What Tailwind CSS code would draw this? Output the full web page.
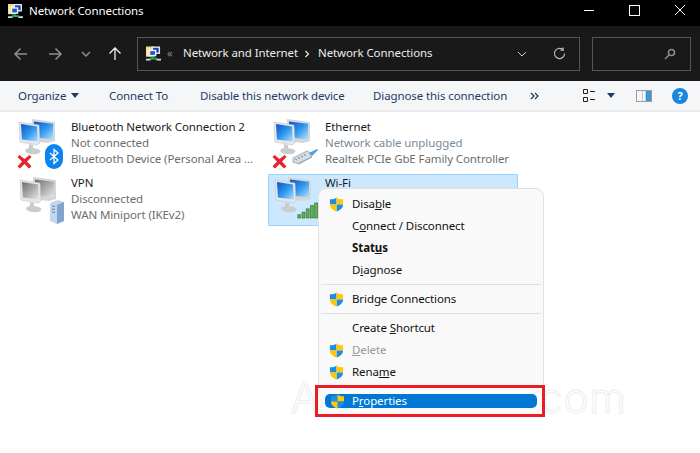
<!DOCTYPE html>
<html lang="en">
<head>
<meta charset="UTF-8">
<title>Network Connections</title>
<script src="https://cdn.jsdelivr.net/npm/@tailwindcss/browser@4"></script>
</head>
<body class="relative w-[700px] h-[453px] overflow-hidden bg-white font-['Noto_Sans',sans-serif] text-[11.5px] tracking-[-0.1px] leading-[16px]">

<svg class="absolute w-0 h-0">
  <defs>
    <linearGradient id="screen" x1="0" y1="0" x2="1" y2="1"><stop offset="0" stop-color="#0a55c8"/><stop offset="0.5" stop-color="#2f95ee"/><stop offset="1" stop-color="#b4e2fb"/></linearGradient>
    <linearGradient id="grey" x1="0" y1="0" x2="1" y2="1"><stop offset="0" stop-color="#6e6e6e"/><stop offset="0.5" stop-color="#a9a9a9"/><stop offset="1" stop-color="#e8e8e8"/></linearGradient>
  </defs>
  <symbol id="pcs" viewBox="0 0 40 36">
    <path d="M15 0l23 3v19l-7 2-9-1-7-2z" fill="#d3d7da"/><path d="M17 2.500l19 2.300v15.500l-19-1.800z" fill="url(#screen)"/>
    <path d="M2 3l20 3 1 18-3 2L3 23z" fill="#e4e7e9" stroke="#b9bec2" stroke-width=".5"/><path d="M4 5l16 2.500 1 15L5 20.500z" fill="url(#screen)"/>
    <path d="M12 25l4 1v3c8 1 10 4 4 6-8 1-14-2-11-5l3-1z" fill="#c9cccf"/>
  </symbol>
  <symbol id="pcs-grey" viewBox="0 0 40 36">
    <path d="M15 0l23 3v19l-7 2-9-1-7-2z" fill="#d3d7da"/><path d="M17 2.500l19 2.300v15.500l-19-1.800z" fill="url(#grey)"/>
    <path d="M2 3l20 3 1 18-3 2L3 23z" fill="#e4e7e9" stroke="#b9bec2" stroke-width=".5"/><path d="M4 5l16 2.500 1 15L5 20.500z" fill="url(#grey)"/>
    <path d="M12 25l4 1v3c8 1 10 4 4 6-8 1-14-2-11-5l3-1z" fill="#c9cccf"/>
  </symbol>
  <symbol id="shield" viewBox="0 0 16 16">
    <path d="M8 .500C6 2 4 2.500 1 2.500V8h7z" fill="#1e8fdc"/>
    <path d="M8 .500c2 1.500 4 2 7 2V8H8z" fill="#ffc70a"/>
    <path d="M8 8v7.500c3.800-1.300 7-3.800 7-7.500z" fill="#1e8fdc"/>
    <path d="M1 8h7v7.500C4.200 14.200 1 11.700 1 8z" fill="#ffc70a"/>
  </symbol>
  <symbol id="cross" viewBox="0 0 15 15">
    <path d="M2.500 1L7.500 5 12.500 1 14.500 3 10 7.500 14.500 12.500 12 14.500 7.500 10 3 14.500 .5 12.500 5 7.500 .5 3z" fill="#e0262c"/>
  </symbol>
  <symbol id="netfolder" viewBox="0 0 16 15">
    <path d="M0 0h8l1 1v10H0z" fill="#f3d77d"/><path d="M.500 2h8v8h-8z" fill="#fbeaa6"/>
    <path d="M6 0h9v8H6z" fill="#e3e8ee"/><path d="M7.500 1.500h6v5h-6z" fill="#1b3fb8"/>
    <path d="M3 3.500h8v7H3z" fill="#eef1f5"/><path d="M4.500 5h5v4h-5z" fill="#1f55cc"/>
    <path d="M6 10.500h2v2H6z" fill="#2fae4e"/><path d="M0 13h5v2H0zM11 13h5v2h-5z" fill="#d8dde2"/><path d="M4 12h8v2H4z" fill="#2fae4e"/>
  </symbol>
</svg>

<header class="h-[26px] bg-black text-white flex items-center pb-[4px]">
  <svg class="ml-[8px] w-[15px] h-[14px]"><use href="#netfolder"/></svg>
  <span class="ml-[6px]">Network Connections</span>
  <div class="ml-auto flex self-start">
    <svg class="w-[46px] h-[20px]" viewBox="0 0 46 20" stroke="#fff" fill="none"><path d="M22 10.500h10"/></svg>
    <svg class="w-[46px] h-[20px]" viewBox="0 0 46 20" stroke="#fff" fill="none"><rect x="21.500" y="5.500" width="10" height="10"/></svg>
    <svg class="w-[46px] h-[20px]" viewBox="0 0 46 20" stroke="#fff" fill="none"><path d="M21 5l10 10M31 5L21 15"/></svg>
  </div>
</header>

<nav class="h-[55px] bg-[#191919] flex items-center text-[#ececec]">
  <svg class="ml-[13px] w-[16px] h-[16px]" viewBox="0 0 16 16" fill="none" stroke="#8f8f8f" stroke-width="1.500"><path d="M14 8H2M7.500 2.500L2 8l5.500 5.500"/></svg>
  <svg class="ml-[18px] w-[16px] h-[16px]" viewBox="0 0 16 16" fill="none" stroke="#8f8f8f" stroke-width="1.500"><path d="M2 8h12M8.500 2.500L14 8l-5.500 5.500"/></svg>
  <svg class="ml-[17px] w-[12px] h-[12px]" viewBox="0 0 12 12" fill="none" stroke="#8f8f8f" stroke-width="1.500"><path d="M2 4l4 4 4-4"/></svg>
  <svg class="ml-[15px] w-[16px] h-[16px]" viewBox="0 0 16 16" fill="none" stroke="#f0f0f0" stroke-width="1.300"><path d="M8 14V2M2.500 7.500L8 2l5.500 5.500"/></svg>

  <div class="ml-[14px] w-[443px] h-[34px] border border-[#555] flex items-center">
    <svg class="ml-[8px] w-[15px] h-[15px]"><use href="#netfolder"/></svg>
    <span class="ml-[6px] w-[16px] pb-[2px] text-[#8a8a8a] text-[11px]">&#171;</span>
    <span class="w-[112px] pb-[2px] whitespace-nowrap">Network and Internet</span>
    <svg class="ml-[8px] mr-[7px] w-[8px] h-[8px]" viewBox="0 0 8 8" fill="none" stroke="#eee" stroke-width="1.200"><path d="M2.500 1l3 3-3 3"/></svg>
    <span class="pb-[2px]">Network Connections</span>
    <svg class="ml-auto w-[10px] h-[8px]" viewBox="0 0 10 8" fill="none" stroke="#ccc"><path d="M1 2l4 4 4-4"/></svg>
    <svg class="ml-[26px] mr-[13px] w-[13px] h-[13px]" viewBox="0 0 14 14" fill="none" stroke="#bdbdbd" stroke-width="1.200"><path d="M12.500 7A5.500 5.500 0 1 1 10.500 2.700M11 .5v3H8"/></svg>
  </div>

  <div class="ml-[12px] w-[99px] h-[34px] border border-[#555] flex items-center justify-end pr-[14px]">
    <svg class="w-[12px] h-[12px]" viewBox="0 0 12 12" fill="none" stroke="#8a8a8a" stroke-width="1.600"><circle cx="7.500" cy="4.500" r="3"/><path d="M5.300 6.700L1 11"/></svg>
  </div>
</nav>

<div class="h-[29px] bg-[#f5f6f7] flex items-center text-[#1f3a67] whitespace-nowrap">
  <span class="ml-[18px] w-[47px]">Organize</span>
  <svg class="ml-[6px] w-[8px] h-[5px]" viewBox="0 0 8 5" fill="#1f3a67"><path d="M0 0h8L4 5z"/></svg>
  <span class="ml-[30px] w-[60px]">Connect To</span>
  <span class="ml-[31px] w-[143px]">Disable this network device</span>
  <span class="ml-[30px] w-[134px]">Diagnose this connection</span>
  <svg class="ml-[23px] w-[9px] h-[8px]" viewBox="0 0 9 8" fill="none" stroke="#1f3a67" stroke-width="1.200"><path d="M1 1l3 3-3 3M5 1l3 3-3 3"/></svg>
  <svg class="ml-[44px] w-[13px] h-[13px]" viewBox="0 0 13 13" fill="none" stroke="#222"><path d="M.5.500h4v4h-4zM.5 8.500h4v4h-4zM7 2.500h5M7 10.500h5"/></svg>
  <svg class="ml-[11px] w-[8px] h-[5px]" viewBox="0 0 8 5" fill="#1f3a67"><path d="M0 0h8L4 5z"/></svg>
  <svg class="ml-[21px] w-[16px] h-[12px]" viewBox="0 0 16 12"><path d="M0 0h16v12H0z" fill="#9a9da1"/><path d="M1 1h5v10H1zM6.500 1h3v10h-3z" fill="#f7f7f7"/><path d="M10 1h5v10h-5z" fill="#3a97dc"/></svg>
  <div class="ml-[20px] w-[16px] h-[16px] rounded-full bg-[#1a86e0] text-white text-[11px] font-bold flex items-center justify-center">?</div>
</div>

<main class="border-t-2 border-[#ececec] grid grid-cols-[254px_254px] pl-[14px] pt-[8px] text-[#6d6d6d]">
  <div class="h-[48px] flex">
    <div class="relative w-[54px] h-[48px] shrink-0">
      <svg class="absolute left-[3px] top-[-1px] w-[40px] h-[36px]"><use href="#pcs"/></svg>
      <svg class="absolute left-[3px] top-[34px] w-[15px] h-[15px]"><use href="#cross"/></svg>
      <div class="absolute left-[31px] top-[24px] w-[18px] h-[25px] rounded-full bg-[#0a84ee] flex items-center justify-center">
        <svg class="w-[10px] h-[17px]" viewBox="0 0 10 17" fill="none" stroke="#fff" stroke-width="1.300"><path d="M1 5l8 7-4 3.500v-14l4 3.500-8 7"/></svg>
      </div>
    </div>
    <div class="pl-[3px] -mt-[1px]">
      <div class="text-[#1a1a1a]">Bluetooth Network Connection 2</div>
      <div>Not connected</div>
      <div>Bluetooth Device (Personal Area ...</div>
    </div>
  </div>
  <div class="h-[48px] flex">
    <div class="relative w-[54px] h-[48px] shrink-0">
      <svg class="absolute left-[4px] top-[-1px] w-[40px] h-[36px]"><use href="#pcs"/></svg>
      <svg class="absolute left-[4px] top-[34px] w-[15px] h-[15px]"><use href="#cross"/></svg>
      <svg class="absolute left-[24px] top-[28px] w-[27px] h-[18px]" viewBox="0 0 27 18"><path d="M1 10l14-7 4 2-1 2 2 2-13 7-6-2z" fill="#d5dde3" stroke="#86929b" stroke-width=".7"/><path d="M3 11l2 1M6 9.500l2 1M9 8l2 1M12 6.500l2 1" stroke="#7c8790"/><path d="M7 15l13-6" stroke="#9aa5ad"/><path d="M17 5l8-4 1 1-6 6z" fill="#45a6dc"/></svg>
    </div>
    <div class="pl-[3px] -mt-[1px]">
      <div class="text-[#1a1a1a]">Ethernet</div>
      <div class="text-[#7a8a99]">Network cable unplugged</div>
      <div>Realtek PCIe GbE Family Controller</div>
    </div>
  </div>
  <div class="h-[52px] mt-[6px] flex">
    <div class="relative w-[54px] h-[48px] shrink-0">
      <svg class="absolute left-[4px] top-[3px] w-[40px] h-[36px]"><use href="#pcs-grey"/></svg>
      <svg class="absolute left-[36px] top-[26px] w-[14px] h-[24px]" viewBox="0 0 14 24"><path d="M0 3l8-3 6 2v19l-7 3-7-3z" fill="#c3d6ea"/><path d="M7 5l7-3v19l-7 3z" fill="#7fa6cf"/><path d="M2 6l3 .5M2 9l3 .5M2 12l3 .5" stroke="#5d7fa6"/></svg>
    </div>
    <div class="pl-[3px] pt-[1px]">
      <div class="text-[#1a1a1a]">VPN</div>
      <div>Disconnected</div>
      <div>WAN Miniport (IKEv2)</div>
    </div>
  </div>
  <div class="h-[52px] mt-[6px] w-[250px] bg-[#cce8ff] border border-[#99d1ff] rounded-[1px] flex">
    <div class="relative w-[56px] h-[48px] shrink-0">
      <svg class="absolute left-[4px] top-[2px] w-[40px] h-[36px]"><use href="#pcs"/></svg>
      <svg class="absolute left-[28px] top-[27px] w-[21px] h-[17px]" viewBox="0 0 25 20" fill="#62b25a" stroke="#2b6f30" stroke-width=".8"><path d="M1 15h3.500v4H1zM6 12h3.500v7H6zM11 8h3.500v11H11zM16 4h3.500v15H16zM21 1h3.500v18H21z"/></svg>
    </div>
    <div class="text-[#1a1a1a]">Wi-Fi</div>
  </div>
</main>

<div class="absolute right-[73px] top-[376px] text-[42px] leading-[44px] text-white [-webkit-text-stroke:1px_#eeeeee] tracking-[1px] whitespace-nowrap font-['Inter',sans-serif] font-light">AvoidErrors.com</div>

<div class="absolute left-[318px] top-[188px] w-[226px] h-[226px] bg-[#f9f9f9] border border-[#e2e2e2] rounded-[8px] py-[4px] text-[#111]">
  <div class="h-[22px] flex items-center"><svg class="ml-[10px] w-[15px] h-[15px]"><use href="#shield"/></svg><span class="ml-[8px]">Disa<u>b</u>le</span></div>
  <div class="h-[22px] flex items-center pl-[33px]"><span>C<u>o</u>nnect / Disconnect</span></div>
  <div class="h-[22px] flex items-center pl-[33px] font-bold"><span>Stat<u>u</u>s</span></div>
  <div class="h-[22px] flex items-center pl-[33px]"><span>D<u>i</u>agnose</span></div>
  <div class="mx-[2px] my-[3px] h-px bg-[#e0e0e0]"></div>
  <div class="h-[22px] flex items-center"><svg class="ml-[10px] w-[15px] h-[15px]"><use href="#shield"/></svg><span class="ml-[8px]">Brid<u>g</u>e Connections</span></div>
  <div class="mx-[2px] my-[3px] h-px bg-[#e0e0e0]"></div>
  <div class="h-[22px] flex items-center pl-[33px]"><span>Create <u>S</u>hortcut</span></div>
  <div class="h-[22px] flex items-center text-[#9a9a9a]"><svg class="ml-[10px] w-[15px] h-[15px]"><use href="#shield"/></svg><span class="ml-[8px]"><u>D</u>elete</span></div>
  <div class="h-[22px] flex items-center"><svg class="ml-[10px] w-[15px] h-[15px]"><use href="#shield"/></svg><span class="ml-[8px]">Rena<u>m</u>e</span></div>
</div>

<div class="absolute left-[315px] top-[385px] w-[230px] h-[32px] border-[3px] border-[#ed1c24] bg-[#fafafa]/80 flex items-center pl-[7px]">
  <div class="w-[212px] h-[14px] bg-[#0078d4] rounded-[5px] flex items-center text-white">
    <svg class="ml-[5px] w-[15px] h-[15px] shrink-0"><use href="#shield"/></svg><span class="ml-[7px]">P<u>r</u>operties</span>
  </div>
</div>

</body>
</html>
